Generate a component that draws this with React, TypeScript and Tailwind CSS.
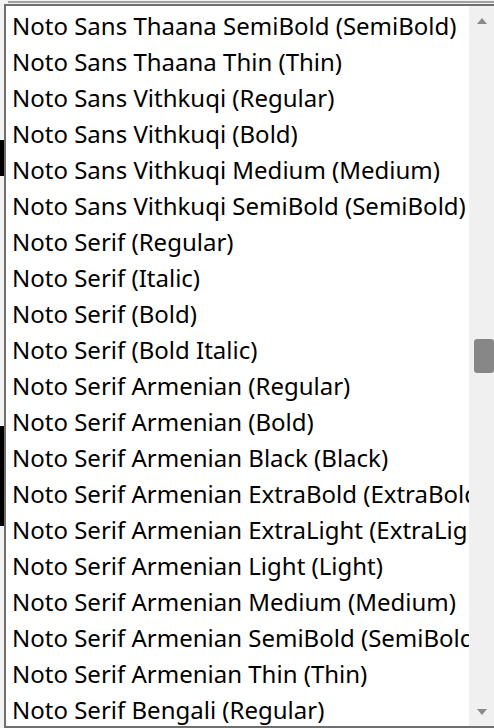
import React from 'react'

const fonts = [
  'Noto Sans Thaana SemiBold (SemiBold)',
  'Noto Sans Thaana Thin (Thin)',
  'Noto Sans Vithkuqi (Regular)',
  'Noto Sans Vithkuqi (Bold)',
  'Noto Sans Vithkuqi Medium (Medium)',
  'Noto Sans Vithkuqi SemiBold (SemiBold)',
  'Noto Serif (Regular)',
  'Noto Serif (Italic)',
  'Noto Serif (Bold)',
  'Noto Serif (Bold Italic)',
  'Noto Serif Armenian (Regular)',
  'Noto Serif Armenian (Bold)',
  'Noto Serif Armenian Black (Black)',
  'Noto Serif Armenian ExtraBold (ExtraBold)',
  'Noto Serif Armenian ExtraLight (ExtraLight)',
  'Noto Serif Armenian Light (Light)',
  'Noto Serif Armenian Medium (Medium)',
  'Noto Serif Armenian SemiBold (SemiBold)',
  'Noto Serif Armenian Thin (Thin)',
  'Noto Serif Bengali (Regular)',
]

const App = () => {
  return (
    <div className="w-[494px] h-[728px] overflow-hidden bg-[#f3f3f3] flex flex-col">
      {/* page behind the dropdown */}
      <div className="h-[4px] shrink-0 flex">
        <div className="w-[8px]" />
        <div className="flex-1 mt-[1px] h-[2px] bg-[#a0a0a0]" />
      </div>
      <div className="flex flex-1 min-h-0">
        <div className="w-[4px] shrink-0 flex flex-col">
          <div className="h-[136px]" />
          <div className="h-[36px] bg-black" />
          <div className="h-[250px]" />
          <div className="h-[100px] bg-black" />
        </div>

        {/* dropdown list */}
        <div className="flex-1 flex border-t-2 border-l-2 border-b-2 border-[#6f6f6f] bg-white min-w-0">
          <ul className="flex-1 min-w-0 overflow-hidden pt-[2px]" style={{ fontFamily: '"Noto Sans", sans-serif' }}>
            {fonts.map((f) => (
              <li key={f} className="h-[36px] pl-[6px] flex items-center whitespace-nowrap text-[24px] text-black">
                {f}
              </li>
            ))}
          </ul>

          {/* scrollbar */}
          <div className="w-[25px] shrink-0 bg-[#f0f0f0] flex flex-col items-center relative">
            <div className="h-[24px] flex items-center justify-center pt-[6px]">
              <svg width="10" height="6" viewBox="0 0 10 6"><path d="M5 0 L10 6 L0 6 Z" fill="#8a8a8a" /></svg>
            </div>
            <div className="flex-1 w-full relative">
              <div className="absolute top-[309px] left-[5px] right-0 h-[34px] rounded-[3px] bg-[#878787]" />
            </div>
            <div className="h-[24px] flex items-center justify-center pb-[4px]">
              <svg width="10" height="6" viewBox="0 0 10 6"><path d="M0 0 L10 0 L5 6 Z" fill="#8a8a8a" /></svg>
            </div>
          </div>
        </div>
      </div>
    </div>
  )
}

export default App
